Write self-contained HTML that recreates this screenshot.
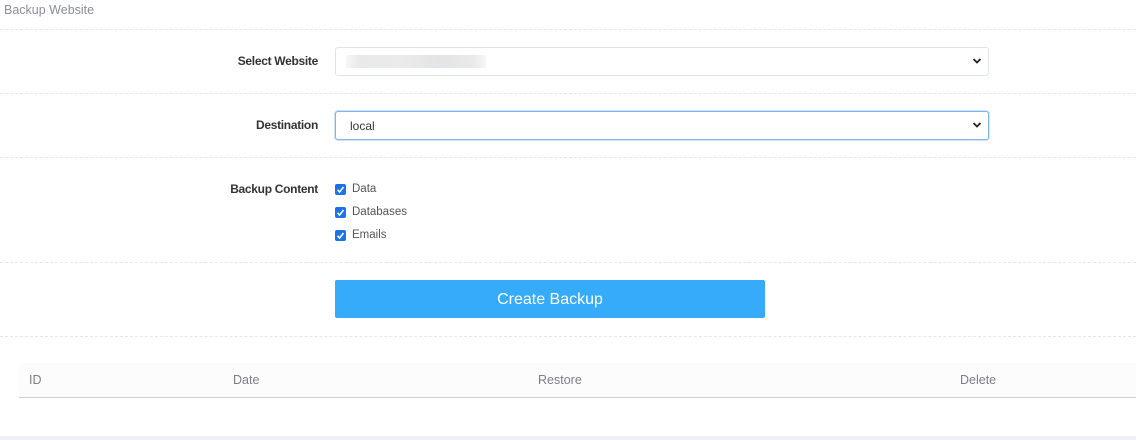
<!DOCTYPE html>
<html><head><style>
body{margin:0;width:1136px;height:440px;background:#fff;font-family:"Liberation Sans",sans-serif;position:relative;overflow:hidden}
.a{position:absolute}
.hr{position:absolute;left:0;width:1136px;border-top:1px dashed #e3e8ee;height:0}
.lbl{position:absolute;right:818px;font-size:12px;color:#333;font-weight:bold;letter-spacing:-0.3px}
.sel{position:absolute;left:335px;width:652px;height:27px;border:1px solid #dfe4ea;border-radius:3px;background:#fff}
.chev{position:absolute;right:6px;top:9px}
.cb{position:absolute;left:335px;width:11px;height:11px;background:#1a73e8;border-radius:2px}
.cb svg{display:block}
.ct{position:absolute;left:352px;font-size:11.5px;color:#555}
</style></head><body>
<div class="a" style="left:4px;top:3px;font-size:12.5px;color:#8a8f98">Backup Website</div>
<div class="hr" style="top:29px"></div>
<div class="lbl" style="top:54px">Select Website</div>
<div class="sel" style="top:47px">
 <div class="a" style="left:10px;top:7px;width:140px;height:13px;background:linear-gradient(90deg,#f6f6f6 0,#e8e9ea 10%,#ebebeb 40%,#e2e4e5 65%,#e9e9e9 90%,#f7f7f7 100%)"></div>
 <svg class="chev" width="10" height="8" viewBox="0 0 10 8"><path d="M1.5 2 L5 5.5 L8.5 2" stroke="#222" stroke-width="1.8" fill="none"/></svg>
</div>
<div class="hr" style="top:93px"></div>
<div class="lbl" style="top:118px">Destination</div>
<div class="sel" style="top:111px;border-color:#7fb4ec;box-shadow:0 0 0 1px #cfe3fa">
 <div class="a" style="left:14px;top:7px;font-size:12px;color:#333">local</div>
 <svg class="chev" width="10" height="8" viewBox="0 0 10 8"><path d="M1.5 2 L5 5.5 L8.5 2" stroke="#222" stroke-width="1.8" fill="none"/></svg>
</div>
<div class="hr" style="top:157px"></div>
<div class="lbl" style="top:182px">Backup Content</div>
<div class="cb" style="top:184px"><svg width="11" height="11"><path d="M2.5 5.8 L4.6 8 L8.5 3" stroke="#fff" stroke-width="1.6" fill="none"/></svg></div>
<div class="ct" style="top:183px">Data</div>
<div class="cb" style="top:207px"><svg width="11" height="11"><path d="M2.5 5.8 L4.6 8 L8.5 3" stroke="#fff" stroke-width="1.6" fill="none"/></svg></div>
<div class="ct" style="top:206px">Databases</div>
<div class="cb" style="top:230px"><svg width="11" height="11"><path d="M2.5 5.8 L4.6 8 L8.5 3" stroke="#fff" stroke-width="1.6" fill="none"/></svg></div>
<div class="ct" style="top:229px">Emails</div>
<div class="hr" style="top:262px"></div>
<div class="a" style="left:335px;top:280px;width:430px;height:38px;background:#35abfa;border-radius:2px;color:#fff;font-size:16px;text-align:center;line-height:39px">Create Backup</div>
<div class="hr" style="top:336px"></div>
<div class="a" style="left:19px;top:363px;width:1117px;height:34px;background:#fcfcfc;border-bottom:1px solid #d0d0d0"></div>
<div class="a" style="left:29px;top:373px;font-size:12.5px;color:#7a7f88">ID</div>
<div class="a" style="left:233px;top:373px;font-size:12.5px;color:#7a7f88">Date</div>
<div class="a" style="left:538px;top:373px;font-size:12.5px;color:#7a7f88">Restore</div>
<div class="a" style="left:960px;top:373px;font-size:12.5px;color:#7a7f88">Delete</div>
<div class="a" style="left:0;top:436px;width:1136px;height:4px;background:#eef1f5"></div>
</body></html>
